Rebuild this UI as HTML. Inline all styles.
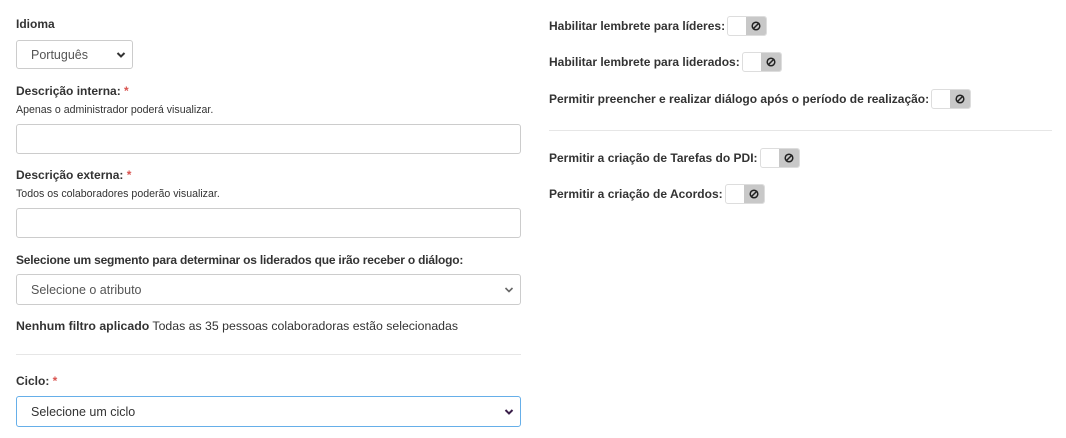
<!DOCTYPE html>
<html><head><meta charset="utf-8"><style>
body{margin:0;width:1066px;height:438px;background:#fff;font-family:"Liberation Sans",sans-serif;color:#333;position:relative;overflow:hidden}
.a{position:absolute;white-space:nowrap}
.l{font-size:12px;font-weight:bold;color:#333}
.s{font-size:10.6px;color:#333}
.r{color:#d9534f}
.box{position:absolute;border:1px solid #ccc;border-radius:3px;background:#fff;box-sizing:border-box;font-size:12.5px;color:#555;padding-left:14px;display:flex;align-items:center}
.chev{position:absolute;right:6px;top:50%;margin-top:-4px}
.hr{position:absolute;height:1px;background:#e6e6e6}
.row{position:absolute;left:549px;display:flex;align-items:center;white-space:nowrap;font-size:12px;font-weight:bold;color:#333;height:20px}
.t{position:relative;display:inline-block;margin-left:2px;width:40px;height:20px;border:1px solid #ddd;border-radius:3px;box-sizing:border-box;background:#fff;overflow:hidden}
.t i{position:absolute;right:0;top:0;width:20px;height:18px;background:#c8c8c8}
.t svg{position:absolute;left:5px;top:4px}
</style></head><body>
<div class="a l" style="left:16px;top:17px">Idioma</div>
<div class="box" style="left:16px;top:40px;width:117px;height:29px">Português<svg class="chev" width="10" height="8" viewBox="0 0 10 8"><path d="M1.5 2l3.5 3.5L8.5 2" stroke="#333" stroke-width="2" fill="none"/></svg></div>
<div class="a l" style="left:16px;top:84px">Descrição interna: <span class="r">*</span></div>
<div class="a s" style="left:16px;top:104px">Apenas o administrador poderá visualizar.</div>
<div class="box" style="left:16px;top:124px;width:505px;height:30px"></div>
<div class="a l" style="left:16px;top:168px">Descrição externa: <span class="r">*</span></div>
<div class="a s" style="left:16px;top:188px">Todos os colaboradores poderão visualizar.</div>
<div class="box" style="left:16px;top:208px;width:505px;height:30px"></div>
<div class="a l" style="left:16px;top:253px;letter-spacing:-0.2px">Selecione um segmento para determinar os liderados que irão receber o diálogo:</div>
<div class="box" style="left:16px;top:274px;width:505px;height:31px">Selecione o atributo<svg class="chev" width="10" height="8" viewBox="0 0 10 8"><path d="M1.5 2l3.5 3.5L8.5 2" stroke="#666" stroke-width="1.6" fill="none"/></svg></div>
<div class="a" style="left:16px;top:319px;font-size:12.3px;color:#333"><b>Nenhum filtro aplicado</b> Todas as 35 pessoas colaboradoras estão selecionadas</div>
<div class="hr" style="left:16px;top:354px;width:505px"></div>
<div class="a l" style="left:16px;top:374px">Ciclo: <span class="r">*</span></div>
<div class="box" style="left:16px;top:396px;width:505px;height:31px;border-color:#66afe9;color:#333">Selecione um ciclo<svg class="chev" width="10" height="8" viewBox="0 0 10 8"><path d="M1.5 2l3.5 3.5L8.5 2" stroke="#3a1f4a" stroke-width="2" fill="none"/></svg></div>

<div class="row" style="top:16px">Habilitar lembrete para líderes:<span class="t"><i><svg width="10" height="10" viewBox="0 0 10 10"><circle cx="5" cy="5" r="3.8" stroke="#222" stroke-width="1.5" fill="none"/><path d="M2.5 7.5L7.5 2.5" stroke="#222" stroke-width="1.5"/></svg></i></span></div>
<div class="row" style="top:52px">Habilitar lembrete para liderados:<span class="t"><i><svg width="10" height="10" viewBox="0 0 10 10"><circle cx="5" cy="5" r="3.8" stroke="#222" stroke-width="1.5" fill="none"/><path d="M2.5 7.5L7.5 2.5" stroke="#222" stroke-width="1.5"/></svg></i></span></div>
<div class="row" style="top:89px">Permitir preencher e realizar diálogo após o período de realização:<span class="t"><i><svg width="10" height="10" viewBox="0 0 10 10"><circle cx="5" cy="5" r="3.8" stroke="#222" stroke-width="1.5" fill="none"/><path d="M2.5 7.5L7.5 2.5" stroke="#222" stroke-width="1.5"/></svg></i></span></div>
<div class="hr" style="left:549px;top:130px;width:503px"></div>
<div class="row" style="top:148px">Permitir a criação de Tarefas do PDI:<span class="t"><i><svg width="10" height="10" viewBox="0 0 10 10"><circle cx="5" cy="5" r="3.8" stroke="#222" stroke-width="1.5" fill="none"/><path d="M2.5 7.5L7.5 2.5" stroke="#222" stroke-width="1.5"/></svg></i></span></div>
<div class="row" style="top:184px">Permitir a criação de Acordos:<span class="t"><i><svg width="10" height="10" viewBox="0 0 10 10"><circle cx="5" cy="5" r="3.8" stroke="#222" stroke-width="1.5" fill="none"/><path d="M2.5 7.5L7.5 2.5" stroke="#222" stroke-width="1.5"/></svg></i></span></div>
</body></html>
